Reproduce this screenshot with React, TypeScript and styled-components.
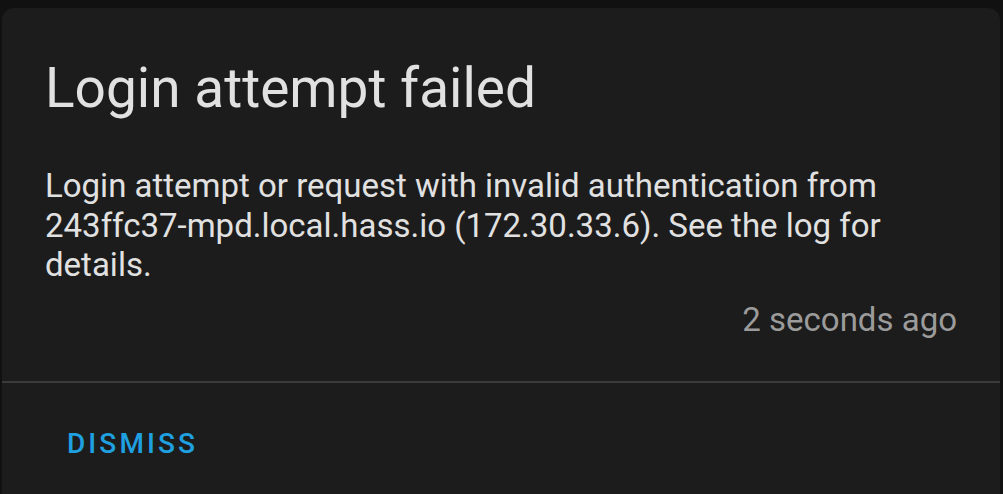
import React from "react";
import styled, { createGlobalStyle } from "styled-components";

const Global = createGlobalStyle`
  html, body { margin: 0; padding: 0; background: #111111; }
  body { font-family: Roboto, "Noto Sans", sans-serif; overflow: hidden; }
`;

const Page = styled.div`
  padding: 8px 3px 0 2px;
  height: 494px;
  box-sizing: border-box;
`;

const Card = styled.div`
  background: #1c1c1c;
  border-radius: 12px 12px 0 0;
  height: 100%;
  display: flex;
  flex-direction: column;
`;

const Header = styled.h1`
  margin: 0;
  padding: 45px 43px 0;
  font-size: 55px;
  font-weight: 400;
  line-height: 70px;
  color: #e1e1e1;
`;

const Content = styled.div`
  padding: 43px 43px 0;
  color: #e1e1e1;
  font-size: 33px;
  line-height: 39.5px;
`;

const Time = styled.div`
  padding: 15px 43px 0;
  text-align: right;
  color: #9b9b9b;
  font-size: 33px;
  line-height: 40px;
`;

const Divider = styled.div`
  margin-top: 41px;
  height: 2px;
  background: #3a3a3a;
`;

const Actions = styled.div`
  padding: 44px 0 0 65px;
`;

const Button = styled.button`
  background: none;
  border: none;
  padding: 0;
  font-family: inherit;
  font-size: 28px;
  line-height: normal;
  font-weight: 500;
  letter-spacing: 0.11em;
  color: #1fa0e0;
  text-transform: uppercase;
  cursor: pointer;
`;

export default function App() {
  return (
    <>
      <Global />
      <Page>
        <Card>
          <Header>Login attempt failed</Header>
          <Content>
            Login attempt or request with invalid authentication from
            243ffc37-mpd.local.hass.io (172.30.33.6). See the log for details.
          </Content>
          <Time>2 seconds ago</Time>
          <Divider />
          <Actions>
            <Button>Dismiss</Button>
          </Actions>
        </Card>
      </Page>
    </>
  );
}
